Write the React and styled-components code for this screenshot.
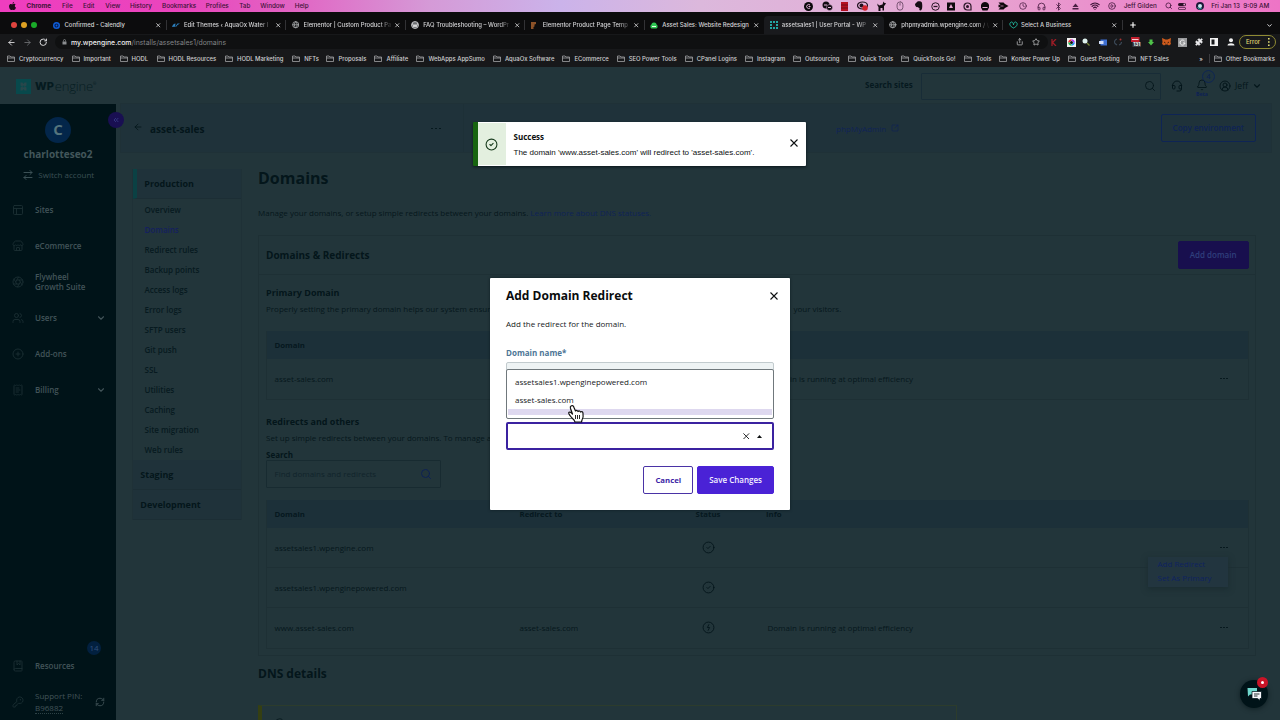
import React from 'react';
import styled, { createGlobalStyle, css } from 'styled-components';
import {
  ArrowLeft, ArrowRight, RotateCw, X, Plus, ChevronDown, ChevronsLeft, Search, Globe,
  Share, Star, Puzzle, Headset, Bell, CircleUserRound, ArrowRightLeft, PanelsTopLeft,
  Store, Aperture, Users, CirclePlus, ReceiptText, BookMarked, KeyRound, RefreshCw, CircleCheck,
  SquareArrowOutUpRight, Headphones, Bluetooth, Wifi, Clock, CirclePlay, Mouse, Info,
} from 'lucide-react';

const ink = '#04161b';
const inkSoft = '#06171c';
const page = '#22353a';
const line = '#1e3035';
const link = '#0f2357';
const ui = '"Open Sans", "Noto Sans", sans-serif';
const system = 'Inter, "Liberation Sans", sans-serif';

const GlobalStyle = createGlobalStyle`
  * { box-sizing: border-box; }
  body { margin: 0; background: ${page}; font-family: ${ui}; font-size: 8px; color: ${inkSoft}; }
  svg { display: block; flex: none; }
`;

const Desktop = styled.div`
  position: relative;
  width: 1280px;
  height: 720px;
  overflow: hidden;
  display: flex;
  flex-direction: column;
  background: ${page};
`;

/* System menu bar */
const MenuBar = styled.div`
  flex: none;
  height: 12px;
  display: flex;
  align-items: center;
  padding-left: 9px;
  font: 500 6.35px/12px ${system};
  color: #3b1236;
  background: linear-gradient(90deg, #ef3dbf 0, #ea45bd 180px, #e263c3 290px, #d59ad7 430px, #cbb3ea 560px,
    #dcb8dc 700px, #e2b0d8 860px, #e8a0d0 1000px, #ee74c6 1280px);
`;
const MenuItem = styled.span`
  flex: none;
  width: ${(p) => p.$w}px;
  white-space: pre;
  font-weight: ${(p) => (p.$bold ? 700 : 500)};
`;
const Slot = styled.span`
  flex: none;
  display: flex;
  align-items: center;
  width: ${(p) => p.$w}px;
  color: ${(p) => p.$c || 'inherit'};
`;
const IconBox = styled.span`
  width: 12px;
  display: flex;
  justify-content: center;
`;

/* Browser chrome */
const TabStrip = styled.div`
  flex: none;
  height: 22px;
  padding-top: 4px;
  display: flex;
  background: #0c0c0d;
  color: #d6d6d8;
  font: 500 5.9px/16px ${system};
`;
const Lights = styled.div`
  width: 47px;
  padding-left: 10.5px;
  display: flex;
  align-items: center;
  gap: 4px;
`;
const Light = styled.i`
  width: 6px;
  height: 6px;
  border-radius: 50%;
  background: ${(p) => p.$c};
`;
const Tab = styled.div`
  flex: none;
  width: 119.55px;
  height: 18px;
  display: flex;
  align-items: center;
  padding: 0 5px 0 4.5px;
  border-radius: 4px 4px 0 0;
  background: ${(p) => (p.$active ? '#191a1d' : 'transparent')};
`;
const TabRule = styled.i`
  flex: none;
  width: 1px;
  height: 10px;
  margin: 0 -5px 0 4px;
  background: ${(p) => (p.$hidden ? 'transparent' : '#323235')};
`;
const Favicon = styled.span`
  width: 13px;
  display: flex;
  justify-content: flex-start;
  padding-left: 1px;
`;
const TabTitle = styled.span`
  flex: none;
  width: 90px;
  white-space: pre;
  mask-image: ${(p) => (p.$fade ? 'linear-gradient(90deg, #000 84%, rgba(0, 0, 0, 0.15) 96%)' : 'none')};
`;
const TabClose = styled.span`
  flex: none;
  width: 7px;
  display: flex;
  justify-content: flex-end;
`;
const StripEnd = styled.div`
  flex: 1;
  display: flex;
  align-items: center;
  justify-content: space-between;
  padding: 0 7.5px 0 6px;
`;

const Toolbar = styled.div`
  flex: none;
  height: 16px;
  display: flex;
  align-items: center;
  padding-left: 5px;
  background: #17181a;
  color: #d9d9db;
`;
const Omnibox = styled.div`
  width: 993px;
  height: 14px;
  margin-left: 1px;
  border-radius: 7px;
  padding-left: 3px;
  display: flex;
  align-items: center;
  background: #0f1011;
  font: 400 6.9px/15px ${system};
  color: #818386;
`;
const Host = styled.span`
  color: #ececee;
  font-weight: 500;
`;
const Url = styled.div`
  flex: 1;
  padding-left: 1px;
  white-space: nowrap;
`;
const ErrorPill = styled.div`
  width: 37px;
  height: 14px;
  border: 1px solid #8f8a33;
  border-radius: 8px;
  display: flex;
  align-items: center;
  justify-content: space-between;
  padding: 0 5px 0 6px;
  color: #e2dc74;
  font: 500 6px/12px ${system};
`;
const Bookmarks = styled.div`
  flex: none;
  height: 17px;
  display: flex;
  align-items: center;
  padding-left: 7px;
  background: #17181a;
  color: #d0d0d2;
  font: 500 5.9px/16px ${system};
`;
const Bookmark = styled.span`
  flex: none;
  width: ${(p) => p.$w}px;
  display: flex;
  align-items: center;
  gap: 4px;
  white-space: nowrap;
`;
const BookmarkSep = styled.i`
  width: 1px;
  height: 9px;
  margin-right: 4px;
  background: #3c3c40;
`;

/* Portal header */
const SiteHeader = styled.header`
  flex: none;
  height: 36px;
  display: flex;
  align-items: center;
  padding: 2px 18px 0 16px;
`;
const Logo = styled.div`
  width: 849px;
  display: flex;
  align-items: center;
  color: #051a1f;
`;
const LogoWP = styled.span`
  margin-left: 4px;
  font: 800 11px/16px ${system};
`;
const LogoEngine = styled.span`
  margin-left: 1px;
  font: 300 13px/15px ${ui};
  letter-spacing: -0.2px;
  color: #071d22;
`;
const Registered = styled.span`
  margin-top: -5px;
  font: 400 4px/5px ${ui};
`;
const SearchLabel = styled.label`
  width: 56px;
  padding-bottom: 3px;
  font-weight: 700;
  color: #06191f;
`;
const SiteSearch = styled.div`
  width: 240px;
  height: 27px;
  border: 1px solid #182c37;
  border-radius: 1px;
  display: flex;
  align-items: center;
  justify-content: flex-end;
  padding-right: 4px;
  color: ${ink};
`;
const HeaderIcon = styled.span`
  width: ${(p) => p.$w}px;
  padding-left: ${(p) => p.$left}px;
  display: flex;
  align-items: center;
  gap: 4px;
  font-size: 8.6px;
  color: ${ink};
`;
const BellBox = styled.span`
  position: relative;
  width: 24px;
  display: flex;
  flex-direction: column;
  align-items: center;
  padding-top: 3px;
  color: ${ink};
`;
const BellCount = styled.span`
  position: absolute;
  right: -1px;
  top: -6px;
  width: 13px;
  height: 13px;
  border-radius: 50%;
  border: 1px solid #0f2654;
  background: #20343c;
  color: #0d2250;
  font: 600 7.5px/11px ${ui};
  text-align: center;
`;
const Beta = styled.span`
  font: 700 5.2px/6px ${ui};
  color: #0d2155;
`;

/* Sidebar */
const Body = styled.div`
  flex: 1;
  min-height: 0;
  display: flex;
`;
const Sidebar = styled.aside`
  position: relative;
  flex: none;
  width: 116px;
  margin-top: 1px;
  background: #001318;
  color: #425459;
  display: flex;
  flex-direction: column;
`;
const Collapse = styled.span`
  position: absolute;
  left: 108px;
  top: 8px;
  width: 16px;
  height: 16px;
  border-radius: 50%;
  background: #190f52;
  color: #3a418c;
  display: flex;
  align-items: center;
  justify-content: center;
`;
const Account = styled.div`
  display: flex;
  flex-direction: column;
  align-items: center;
  padding-top: 13px;
  height: 88px;
`;
const Avatar = styled.span`
  width: 26px;
  height: 26px;
  border-radius: 50%;
  background: #03264a;
  color: #55747c;
  font: 700 15px/25px ${ui};
  text-align: center;
`;
const AccountName = styled.span`
  margin-top: 3px;
  font: 700 10px/16px ${ui};
  color: #42565a;
`;
const SwitchAccount = styled.span`
  margin-top: 7px;
  display: flex;
  align-items: center;
  gap: 4.5px;
  line-height: 12px;
  color: #3b5055;
`;
const NavRow = styled.div`
  height: ${(p) => p.$h || 36}px;
  display: flex;
  align-items: center;
  padding: 0 10px 0 12px;
  line-height: 10px;
  font-weight: 600;
`;
const NavIcon = styled.span`
  width: 23px;
  color: #1b2f33;
`;
const NavText = styled.span`
  flex: 1;
  white-space: pre-line;
`;
const Spacer = styled.div`
  flex: 1;
`;
const ResourceCount = styled.span`
  align-self: flex-end;
  width: 14px;
  height: 14px;
  margin: 0 15px -1px 0;
  border-radius: 50%;
  background: #02203f;
  color: #31507c;
  font: 400 8px/14px ${ui};
  text-align: center;
`;
const PinRow = styled(NavRow)`
  height: 40px;
  margin: 4px 0 -2px;
  padding-right: 11px;
  font-weight: 400;
  line-height: 12.5px;
`;
const Pin = styled.span`
  border-bottom: 1px dotted #2d4246;
`;

/* Environment header */
const Main = styled.main`
  flex: 1;
  min-width: 0;
  display: flex;
  flex-direction: column;
`;
const EnvHeader = styled.div`
  flex: none;
  height: 50px;
  margin: 0 8px 0 4px;
  display: flex;
  align-items: center;
  border: 1px solid #1f3137;
  background: #1f323a;
`;
const EnvTitle = styled.div`
  width: 343px;
  height: 100%;
  display: flex;
  align-items: center;
  padding: 1px 22px 0 12px;
  border-right: 1px solid #1d3037;
  color: ${ink};
`;
const BackIcon = styled.span`
  padding-bottom: 4px;
`;
const EnvName = styled.span`
  flex: 1;
  padding-left: 7px;
  font: 700 10px/14px ${ui};
`;
const EnvLink = styled.span`
  flex: 1;
  display: flex;
  align-items: center;
  gap: 5px;
  padding: 0 0 0 372px;
  color: ${link};
`;
const Button = styled.span`
  flex: none;
  height: 28px;
  padding: 0 11px 1px;
  border-radius: 2px;
  display: flex;
  align-items: center;
  border: 1px solid;
  font-weight: 600;
  ${(p) => ({
    dimOutline: css`border-color: #0e2455; color: #0e2355; margin-right: 15px;`,
    dimSolid: css`border-color: #180f4e; background: #180f4e; color: #2f3f7c;`,
    outline: css`border-color: #4a33a6; background: #fff; color: #3c1fa6; font-weight: 700; font-size: 7.8px;`,
    solid: css`border-color: #4a22d6; background: #4a22d6; color: #f4f0ff;`,
  }[p.$kind])}
`;

/* Environment navigation */
const Columns = styled.div`
  flex: 1;
  min-height: 0;
  display: flex;
  padding: 16px 24px 0 16px;
`;
const EnvNav = styled.nav`
  flex: none;
  width: 110px;
  height: 351px;
  margin-right: 16px;
  border: 1px solid #1f3137;
  border-width: 0 1px;
  overflow: hidden;
`;
const EnvHeading = styled.div`
  height: 30px;
  display: flex;
  align-items: center;
  padding: 1px 0 0 7.3px;
  border-left: ${(p) => (p.$current ? '4px solid #0b4144' : '0')};
  border-bottom: 1px solid #1c2e35;
  background: #1f323a;
  color: ${ink};
  font: 700 9px/12px ${ui};
`;
const EnvList = styled.div`
  padding-bottom: 1px;
`;
const EnvItem = styled.div`
  height: 20px;
  line-height: 21px;
  padding-left: 11.5px;
  font-weight: 600;
  color: ${(p) => (p.$current ? '#14205f' : '#071a20')};
`;

/* Content */
const Content = styled.section`
  flex: 1;
  min-width: 0;
`;
const Title = styled.h1`
  margin: 0;
  font: 700 16px/19px ${ui};
  color: ${ink};
`;
const Lead = styled.p`
  margin: 19px 0 16px;
  line-height: 12px;
`;
const TextLink = styled.span`
  color: ${link};
`;
const Card = styled.div`
  height: 421px;
  border: 1px solid ${line};
  padding: 0 7px;
`;
const CardHeader = styled.div`
  height: 39px;
  margin: 0 -7px;
  padding: 0 6.5px 0 7px;
  display: flex;
  align-items: center;
  justify-content: space-between;
  border-bottom: 1px solid ${line};
  font: 700 10px/14px ${ui};
  color: ${ink};
`;
const AddDomain = styled(Button)`
  font: 600 8px/12px ${ui};
`;
const SectionTitle = styled.h3`
  margin: ${(p) => p.$top}px 0 4px;
  font: 700 9px/12px ${ui};
  color: ${ink};
`;
const Copy = styled.p`
  margin: 0;
  display: flex;
  height: 12px;
  line-height: 12px;
  white-space: nowrap;
`;
const CopyStart = styled.span`
  width: 527.5px;
`;
const Table = styled.div`
  width: 983px;
  margin-top: ${(p) => p.$top}px;
  border: 1px solid ${line};
  border-top: 0;
`;
const Row = styled.div`
  display: grid;
  grid-template-columns: 245px 172px 33px 1fr 21px;
  align-items: center;
  height: ${(p) => (p.$head ? 28 : 40)}px;
  padding: 0 20.5px ${(p) => (p.$head ? 0 : p.$last ? 2 : 1)}px 7.5px;
  border-bottom: ${(p) => (p.$head || p.$last ? 0 : 1)}px solid ${line};
  background: ${(p) => (p.$head ? '#1c3039' : 'transparent')};
  font-weight: ${(p) => (p.$head ? 700 : 400)};
  font-size: ${(p) => (p.$head ? 7.8 : 8)}px;
  color: ${(p) => (p.$head ? '#06181f' : inkSoft)};
`;
const StatusCell = styled.span`
  display: flex;
  justify-content: center;
`;
const InfoCell = styled.span`
  padding-left: ${(p) => (p.$head ? 41.5 : 43)}px;
  white-space: nowrap;
`;
const ActionCell = styled.span`
  position: relative;
  display: flex;
  justify-content: flex-end;
  padding-top: 1px;
`;
const Dots = styled.span`
  display: flex;
  gap: ${(p) => (p.$wide ? 2 : 1)}px;
  &::before, &::after, i { content: ''; width: 2px; height: 1.6px; border-radius: 1px; background: ${ink}; }
`;
const ActionMenu = styled.div`
  position: absolute;
  z-index: 1;
  right: 0;
  top: 11px;
  width: 80px;
  height: 30px;
  padding: 0 0 0 10px;
  background: #22353f;
  box-shadow: 0 2px 5px 1px #1c2e33;
  color: #0f2360;
  line-height: 14.5px;
`;
const FieldLabel = styled.div`
  margin-top: 5px;
  font: 700 8px/11px ${ui};
  color: ${ink};
`;
const DomainSearch = styled.div`
  width: 175px;
  height: 28px;
  border: 1px solid #182b31;
  border-radius: 1px;
  display: flex;
  align-items: center;
  justify-content: space-between;
  padding: 0 8px 1px 7.5px;
  color: #11242b;
`;
const DnsTitle = styled.h2`
  margin: 10px 0 23px;
  font: 700 12px/16px ${ui};
  color: ${ink};
`;
const Notice = styled.div`
  width: 699px;
  height: 40px;
  padding: 12px 0 0 13px;
  border: 1px solid #2c3c2c;
  border-left: 4px solid #353f12;
  color: ${ink};
  display: flex;
  gap: 12px;
`;

/* Overlays */
const Toast = styled.div`
  position: absolute;
  left: 473px;
  top: 122px;
  width: 333px;
  height: 44px;
  display: flex;
  background: #fff;
  border: solid #17640f;
  border-width: 0 0 0 5px;
  border-radius: 1px;
  color: #0c0f10;
  box-shadow: 0 1px 3px rgba(0, 10, 14, 0.7);
`;
const ToastIcon = styled.span`
  width: 27.5px;
  margin: 1px 0;
  display: flex;
  align-items: center;
  justify-content: center;
  background: #e3efdf;
  color: #173a1c;
`;
const ToastText = styled.div`
  flex: 1;
  padding: 8.5px 0 0 8px;
  font: 400 8px/12px "Liberation Sans", Arial, sans-serif;
`;
const ToastTitle = styled.div`
  margin-bottom: 4px;
  font: 700 8px/12px ${ui};
`;
const ToastClose = styled.span`
  width: 26px;
  display: flex;
  align-items: center;
  padding: 0 0 2px 9.5px;
`;
const Modal = styled.div`
  position: absolute;
  left: 490px;
  top: 278px;
  width: 300px;
  height: 232px;
  padding: 10px 16px 0;
  border-radius: 1px;
  background: #fff;
  color: #16191b;
  box-shadow: 0 0 3px rgba(0, 16, 20, 0.6);
`;
const ModalHead = styled.div`
  display: flex;
  align-items: center;
  justify-content: space-between;
  height: 16px;
  margin-right: -4px;
  color: #0a0c0d;
  font: 700 12px/16px ${ui};
`;
const ModalText = styled.p`
  margin: 14px 0 16px;
  line-height: 12px;
`;
const ModalLabel = styled.div`
  height: 12px;
  margin-bottom: 4px;
  font: 700 8px/13px ${ui};
  color: #4d7596;
`;
const Fields = styled.div`
  position: relative;
  height: 88px;
  display: flex;
  flex-direction: column;
  justify-content: space-between;
`;
const LockedSelect = styled.div`
  height: 28px;
  border: 1px solid #c2cbce;
  border-radius: 2px;
  background: #eef3f4;
`;
const Options = styled.div`
  position: absolute;
  left: 0;
  top: 7px;
  width: 268px;
  height: 50px;
  padding: 3px 0;
  border: 1px solid #70787c;
  border-radius: 2px;
  background: #fff;
`;
const Option = styled.div`
  height: 18px;
  padding-left: 8px;
  line-height: 18px;
`;
const OptionHover = styled.div`
  height: 6px;
  margin: 0 1px;
  background: #ded8ef;
`;
const Combo = styled.div`
  height: 28px;
  border: 2px solid #3b22a0;
  border-radius: 2px;
  display: flex;
  align-items: center;
  justify-content: flex-end;
  gap: 7px;
  padding-right: 10.5px;
  background: #fff;
`;
const ModalActions = styled.div`
  margin-top: 16px;
  display: flex;
  justify-content: flex-end;
  gap: 4px;
`;
const Pointer = styled.div`
  position: absolute;
  left: 567px;
  top: 404px;
`;
const Chat = styled.div`
  position: absolute;
  left: 1240px;
  top: 680px;
  width: 28px;
  height: 28px;
  border-radius: 50%;
  background: #001318;
  box-shadow: 0 1px 5px rgba(0, 16, 20, 0.6);
  display: flex;
  align-items: center;
  justify-content: center;
`;
const ChatBadge = styled.span`
  position: absolute;
  right: 0;
  top: -3px;
  width: 11px;
  height: 11px;
  border-radius: 50%;
  border: 4px solid #c91427;
  background: #fff;
`;

const menuItems = [['Chrome', 35.5, true], ['File', 21], ['Edit', 22.3], ['View', 24.7], ['History', 32], ['Bookmarks', 43.8],
  ['Profiles', 33.4], ['Tab', 21], ['Window', 34.5], ['Help', 508]];

const disc = (inner) => (
  <svg width="9" height="9" viewBox="0 0 18 18"><circle cx="9" cy="9" r="9" fill="#0b090b" />{inner}</svg>
);
const statusIcons = [
  [19, disc(<path d="M12 6a4 4 0 1 0 0 6M9 9h4" stroke="#e6b4da" strokeWidth="2" fill="none" />)],
  [17, <svg width="11" height="10" viewBox="0 0 22 20"><circle cx="8" cy="8" r="7" fill="#120c12" /><circle cx="15" cy="13" r="6" fill="#120c12" stroke="#dfb2d8" strokeWidth="1" /><path d="M12 13h6M4 8h6" stroke="#e6b4da" strokeWidth="2" /></svg>],
  [18, <svg width="7" height="9" viewBox="0 0 14 18"><path d="M0 0h14v18H0z" fill="#b50f22" /><path d="M0 6h14M0 12h14" stroke="#6e0a16" strokeWidth="2" /></svg>],
  [19, <svg width="11" height="10" viewBox="0 0 22 20"><ellipse cx="11" cy="9" rx="10" ry="7" fill="none" stroke="#221320" strokeWidth="2.4" /><circle cx="9" cy="9" r="4" fill="#221320" /><circle cx="16" cy="14" r="5.5" fill="#d3202c" /></svg>],
  [18, <svg width="9" height="10" viewBox="0 0 18 20"><path d="M1 5l3 4 7-2 2-6 2 3h3l-2 4-2 2v9h-3v-5H7v6H3v-8L1 9z" fill="#140c13" /></svg>],
  [19, <Mouse size={10} color="#6f4c69" strokeWidth={2.2} />],
  [17, <svg width="9" height="10" viewBox="0 0 18 20"><path d="M2 6l5-5c4-1 9 0 9 3 1 6 1 14-3 15-3 0-3-4-1-4-3-1-3-2-4-3-3 1-6-1-6-6z" fill="#140c13" /></svg>],
  [15.5, <svg width="9" height="9" viewBox="0 0 18 18"><circle cx="9" cy="9" r="7.5" fill="none" stroke="#2a1727" strokeWidth="2" /><path d="M5 9h8" stroke="#2a1727" strokeWidth="2.6" /></svg>],
  [16.5, <svg width="8" height="9" viewBox="0 0 16 18"><path d="M0 1h16v16H0z" fill="#0e090d" /><path d="M8 4l4 8H4z" fill="#e8a8d4" /></svg>],
  [17.5, <svg width="9" height="9" viewBox="0 0 18 18"><path d="M16 16H9A7 7 0 1 1 16 9z" fill="none" stroke="#2a1727" strokeWidth="2.4" /><circle cx="9" cy="9" r="3" fill="#2a1727" /></svg>],
  [18.5, <svg width="10" height="9" viewBox="0 0 20 18"><path d="M2 6c2-8 14-8 16 0v5l-3 6H5l-3-6z" fill="#0e090d" /><path d="M5 11h10" stroke="#e8a8d4" strokeWidth="2" /></svg>],
  [19, <svg width="11" height="8" viewBox="0 0 22 16"><path d="M1 1h10l3 3 7 4-7 4-3 3H1l4-4.500H1v-5h4z" fill="#0e090d" /><path d="M5 8h6" stroke="#e8a0d0" strokeWidth="1.400" /></svg>],
  [19, <Clock size={8} strokeWidth={2} />],
  [17, <Headphones size={9} strokeWidth={2} />],
  [17, <Bluetooth size={9} strokeWidth={2} />],
  [19, <svg width="7" height="7" viewBox="0 0 14 14"><path d="M7 1l6 7H1zM1 10h12v3H1z" fill="#4b2044" /></svg>],
  [17, <Wifi size={10} strokeWidth={2.8} />],
  [18, <CirclePlay size={8} strokeWidth={2.2} />],
];

const tabs = [
  ['Confirmed - Calendly', <svg width="7" height="7" viewBox="0 0 14 14"><circle cx="7" cy="7" r="7" fill="#0f5fd8" /><circle cx="7" cy="7" r="3" fill="none" stroke="#061e58" strokeWidth="2.4" /></svg>],
  ['Edit Themes ‹ AquaOx Water I', <svg width="8" height="6" viewBox="0 0 16 12"><path d="M0 10c2-6 4-7 7-7l-1 7 5-7h5l-5 3-2 3z" fill="#2c7fbd" /></svg>, 'fade'],
  ['Elementor | Custom Product Pa', <Globe size={7.5} color="#a9abae" strokeWidth={2.6} />, 'fade'],
  ['FAQ Troubleshooting – WordPr', <svg width="8" height="8" viewBox="0 0 16 16"><circle cx="8" cy="8" r="7" fill="#6d6f72" stroke="#d5d6d8" strokeWidth="1.6" /><path d="M3 5l3 7 2-5 2 5 3-7" fill="none" stroke="#fff" strokeWidth="1.6" /></svg>, 'fade'],
  ['Elementor Product Page Temp', <svg width="5" height="7" viewBox="0 0 10 14"><path d="M0 0h10v4l-3 1v4l-2 1v4H0z" fill="#8c5228" /></svg>, 'fade'],
  ['Asset Sales: Website Redesign', <svg width="8" height="7" viewBox="0 0 16 14"><path d="M8 1c4 0 5 3 5 4 3 1 3 7 0 8H3c-3-1-3-7 0-8 0-1 1-4 5-4z" fill="#2fc653" /><path d="M4 9h8" stroke="#e6ffe9" strokeWidth="2" /></svg>],
  ['assetsales1 | User Portal - WP', <svg width="8" height="8" viewBox="0 0 16 16"><path d="M0 0h4v4H0zM6 0h4v4H6zM12 0h4v4h-4zM0 6h4v4H0zM12 6h4v4h-4zM0 12h4v4H0zM6 12h4v4H6zM12 12h4v4h-4z" fill="#23a6a4" /></svg>, 'fade', true],
  ['phpmyadmin.wpengine.com / \\', <Globe size={7.5} color="#a9abae" strokeWidth={2.6} />, 'fade'],
  ['Select A Business', <svg width="9" height="8" viewBox="0 0 18 16"><path d="M9 14C2 11 0 6 3 3s6 1 6 5c0-4 3-8 6-5s1 8-6 11z" fill="none" stroke="#22b39a" strokeWidth="2" /></svg>],
];

const extensions = [
  [16, <Share size={7.5} strokeWidth={2.2} />],
  [18.5, <Star size={8} strokeWidth={2.2} />],
  [17, <svg width="6" height="7" viewBox="0 0 12 14"><path d="M2 0v14M10 0L3 7l7 7" fill="none" stroke="#a01c26" strokeWidth="2.6" /></svg>],
  [15, <svg width="9" height="9" viewBox="0 0 18 18"><path d="M0 0h18v18H0z" fill="#f2f2f2" /><path d="M4 9a5 5 0 0 1 5-5" stroke="#e33" strokeWidth="3.4" fill="none" /><path d="M9 4a5 5 0 0 1 5 5" stroke="#a3f" strokeWidth="3.4" fill="none" /><path d="M14 9a5 5 0 0 1-5 5" stroke="#29f" strokeWidth="3.4" fill="none" /><path d="M9 14a5 5 0 0 1-5-5" stroke="#2b5" strokeWidth="3.4" fill="none" /><circle cx="9" cy="9" r="3" fill="#111" /></svg>],
  [17, <svg width="8" height="8" viewBox="0 0 16 16"><circle cx="6" cy="6" r="5" fill="#dff2ee" /><path d="M10 10l5 5" stroke="#7a8a3a" strokeWidth="2.6" /></svg>],
  [15, <svg width="9" height="7" viewBox="0 0 18 14"><path d="M3 1h13v12H3z" fill="#3e6fd2" /><path d="M0 4h9v6H0z" fill="#d4e0fa" /></svg>],
  [17, <svg width="8" height="8" viewBox="0 0 16 16"><path d="M6 2a6 6 0 0 0-4 9l4 3M10 14a6 6 0 0 0 5-6" fill="none" stroke="#3c4a58" strokeWidth="2.2" /><circle cx="13" cy="3" r="2" fill="#a33" /></svg>],
  [15.5, <svg width="11" height="12" viewBox="0 0 22 24"><path d="M2 2h17v10H2z" fill="#c3202f" /><path d="M4 7h13" stroke="#fff" strokeWidth="1.6" /><path d="M5 12h17v10H5z" fill="#3a3c3f" /><text x="13.5" y="20.4" textAnchor="middle" fontSize="9.5" fontWeight="700" fontFamily="Inter" fill="#f1f1f1">131</text></svg>],
  [15.5, <svg width="6" height="7" viewBox="0 0 12 14"><path d="M3 1h6v5h3l-6 7-6-7h3z" fill="#4fc34a" /></svg>],
  [16.5, <svg width="9" height="8" viewBox="0 0 18 16"><path d="M0 0l7 3h4l7-3-1 8 1 4-4 3-3-2H7l-3 2-4-3 1-4z" fill="#cc5a1c" /><path d="M4 8l3 2M14 8l-3 2" stroke="#3b1c0c" strokeWidth="2" /></svg>],
  [16, <svg width="9" height="9" viewBox="0 0 18 18"><path d="M0 0h18v18H0z" fill="#9a9b9d" /><path d="M13 6a5 5 0 1 0 1 4h-4" fill="none" stroke="#f5f5f5" strokeWidth="2" /></svg>],
  [15.5, <Puzzle size={8} fill="#ececee" color="#ececee" strokeWidth={1.5} />],
  [16.5, <svg width="8" height="8" viewBox="0 0 16 16"><path d="M1.5 1.5h13v13h-13z" fill="none" stroke="#f2f2f2" strokeWidth="3" /><path d="M9 2h5v12H9z" fill="#f2f2f2" /></svg>],
  [14.5, <svg width="8" height="8" viewBox="0 0 16 16"><circle cx="8" cy="4.5" r="4" fill="#f2f2f2" /><path d="M1 15c0-6 14-6 14 0z" fill="#f2f2f2" /></svg>],
];

const bookmarks = [['Cryptocurrency', 64.5], ['Important', 48], ['HODL', 37], ['HODL Resources', 68.5], ['HODL Marketing', 67.3],
  ['NFTs', 34.2], ['Proposals', 48], ['Affiliate', 42], ['WebApps AppSumo', 76.5], ['AquaOx Software', 69.4],
  ['ECommerce', 54.3], ['SEO Power Tools', 68], ['CPanel Logins', 60.3], ['Instagram', 48], ['Outsourcing', 55.3],
  ['Quick Tools', 53], ['QuickTools Go!', 63], ['Tools', 35], ['Konker Power Up', 69], ['Guest Posting', 60], ['NFT Sales', 71]];

const envItems = ['Overview', 'Domains', 'Redirect rules', 'Backup points', 'Access logs', 'Error logs', 'SFTP users',
  'Git push', 'SSL', 'Utilities', 'Caching', 'Site migration', 'Web rules'];

const navItems = [
  ['Sites', PanelsTopLeft], ['eCommerce', Store], ['Flywheel\nGrowth Suite', Aperture], ['Users', Users, true],
  ['Add-ons', CirclePlus], ['Billing', ReceiptText, true],
];

const FolderIcon = () => (
  <svg width="8" height="7" viewBox="0 0 16 14"><path d="M1 2h5l2 2h7v9H1zM1 6h14" fill="none" stroke="#a9a9ac" strokeWidth="1.5" /></svg>
);
const Apple = () => (
  <svg width="7" height="8" viewBox="0 0 14 16"><path d="M10 0c0 2-1 3.500-3 3.500C7 1.500 8.500.3 10 0zM7 4.500c1 0 2-1 3.500-1 1 0 2 .5 2.800 1.500-2.500 1.500-2 5 .7 6-.8 2.500-2.300 5-4 5-1.200 0-1.600-.7-3-.7s-1.800.7-3 .7C1.500 16-2 8 1.500 4.800 3.500 3 5.500 4.500 7 4.500z" fill="#1d0a1a" /></svg>
);
const LogoMark = () => (
  <svg width="15" height="15" viewBox="0 0 30 30"><path d="M0 0h30v30H0z" fill="#08494c" /><path d="M9 7h4l2 3 2-3h4v6l-3 2 3 2v6h-4l-2-3-2 3H9v-6l3-2-3-2z" fill="#28474b" /><circle cx="15" cy="15" r="2" fill="#08494c" /></svg>
);
const Bolt = () => (
  <svg width="13" height="13" viewBox="0 0 24 24" fill="none" stroke={ink} strokeWidth="1.700"><circle cx="12" cy="12" r="10" /><path d="M13 6l-3 6h4l-3 6" /></svg>
);
const Close = ({ size = 8 }) => (
  <svg width={size} height={size} viewBox="0 0 16 16"><path d="M1 1l14 14M15 1L1 15" stroke="#0d1011" strokeWidth="2.200" fill="none" /></svg>
);
const MoreDots = ({ wide }) => <Dots $wide={wide}><i /></Dots>;

function BrowserChrome() {
  return (
    <>
      <MenuBar>
        <Slot $w={17.5}><Apple /></Slot>
        {menuItems.map(([t, w, b]) => <MenuItem key={t} $w={w} $bold={b}>{t}</MenuItem>)}
        {statusIcons.map(([w, icon], i) => <Slot key={i} $w={w}><IconBox>{icon}</IconBox></Slot>)}
        <MenuItem $w={39}>Jeff Gilden</MenuItem>
        <Slot $w={13.5}><IconBox><Search size={7.5} strokeWidth={2.4} /></IconBox></Slot>
        <Slot $w={18}><IconBox><svg width="8" height="7" viewBox="0 0 16 14"><rect width="16" height="6" rx="3" fill="#2c1228" /><circle cx="12.500" cy="3" r="1.800" fill="#eda0d4" /><rect x="1" y="8.500" width="14" height="5" rx="2.500" fill="none" stroke="#2c1228" strokeWidth="1.600" /></svg></IconBox></Slot>
        <Slot $w={17}><IconBox><svg width="8" height="8" viewBox="0 0 16 16"><circle cx="8" cy="8" r="8" fill="#1c1838" /><circle cx="8" cy="8" r="4" fill="#c8e8f2" /><path d="M3 11a6 6 0 0 0 8 2" stroke="#27b6a8" strokeWidth="2" fill="none" /></svg></IconBox></Slot>
        <MenuItem $w={62}>{'Fri Jan 13  9:09 AM'}</MenuItem>
      </MenuBar>
      <TabStrip>
        <Lights><Light $c="#e0443e" /><Light $c="#dea123" /><Light $c="#1aab29" /></Lights>
        {tabs.map(([t, icon, fade, active], i) => (
          <Tab key={t} $active={active}>
            <Favicon>{icon}</Favicon>
            <TabTitle $fade={!!fade}>{t}</TabTitle>
            <TabClose><X size={6.5} strokeWidth={3} /></TabClose>
            <TabRule $hidden={active || i === 5} />
          </Tab>
        ))}
        <StripEnd><Plus size={8} strokeWidth={3.4} color="#fff" /><ChevronDown size={7} strokeWidth={3.4} /></StripEnd>
      </TabStrip>
      <Toolbar>
        <Slot $w={16}><IconBox><ArrowLeft size={9} strokeWidth={2.4} /></IconBox></Slot>
        <Slot $w={16} $c="#6b6d70"><IconBox><ArrowRight size={9} strokeWidth={2.4} /></IconBox></Slot>
        <Slot $w={17}><IconBox><RotateCw size={8.5} strokeWidth={2.8} /></IconBox></Slot>
        <Omnibox>
          <IconBox><svg width="5" height="6" viewBox="0 0 10 12"><path d="M1 5h8v6H1z" fill="#8b8d90" /><path d="M3 5V3a2 2 0 0 1 4 0v2" fill="none" stroke="#8b8d90" strokeWidth="1.500" /></svg></IconBox>
          <Url><Host>my.wpengine.com</Host>/installs/assetsales1/domains</Url>
          {extensions.slice(0, 2).map(([w, icon], i) => <Slot key={i} $w={w} $c="#cfd0d2"><IconBox>{icon}</IconBox></Slot>)}
        </Omnibox>
        {extensions.slice(2).map(([w, icon], i) => <Slot key={i} $w={w}><IconBox>{icon}</IconBox></Slot>)}
        <ErrorPill>Error<svg width="2" height="8" viewBox="0 0 2 8"><path d="M0 0h1.600v1.600H0zM0 3.200h1.600v1.600H0zM0 6.400h1.600V8H0z" fill="#e2dc74" /></svg></ErrorPill>
      </Toolbar>
      <Bookmarks>
        {bookmarks.map(([t, w]) => <Bookmark key={t} $w={w}><FolderIcon />{t}</Bookmark>)}
        <Bookmark $w={9.5}>»</Bookmark>
        <BookmarkSep />
        <Bookmark $w={64}><FolderIcon />Other Bookmarks</Bookmark>
      </Bookmarks>
    </>
  );
}

function PortalHeader() {
  return (
    <SiteHeader>
      <Logo><LogoMark /><LogoWP>WP</LogoWP><LogoEngine>engine</LogoEngine><Registered>®</Registered></Logo>
      <SearchLabel>Search sites</SearchLabel>
      <SiteSearch><Search size={12} strokeWidth={1.8} /></SiteSearch>
      <HeaderIcon $w={29} $left={10}><Headset size={12} strokeWidth={2} /></HeaderIcon>
      <BellBox><Bell size={12} strokeWidth={1.8} /><Beta>Beta</Beta><BellCount>4</BellCount></BellBox>
      <HeaderIcon $w={48} $left={5}><CircleUserRound size={12} strokeWidth={2} />Jeff<ChevronDown size={10} strokeWidth={2.6} /></HeaderIcon>
    </SiteHeader>
  );
}

function AccountSidebar() {
  return (
    <Sidebar>
      <Collapse><ChevronsLeft size={8} strokeWidth={2.4} /></Collapse>
      <Account>
        <Avatar>C</Avatar>
        <AccountName>charlotteseo2</AccountName>
        <SwitchAccount><ArrowRightLeft size={12} strokeWidth={2} />Switch account</SwitchAccount>
      </Account>
      {navItems.map(([t, Icon, open]) => (
        <NavRow key={t}>
          <NavIcon><Icon size={12} strokeWidth={1.8} /></NavIcon>
          <NavText>{t}</NavText>
          {open && <ChevronDown size={10} strokeWidth={2.6} />}
        </NavRow>
      ))}
      <Spacer />
      <ResourceCount>14</ResourceCount>
      <NavRow $h={24}>
        <NavIcon><BookMarked size={12} strokeWidth={1.8} /></NavIcon>
        <NavText>Resources</NavText>
      </NavRow>
      <PinRow>
        <NavIcon><KeyRound size={12} strokeWidth={1.8} /></NavIcon>
        <NavText>Support PIN: <Pin>B96882</Pin></NavText>
        <RefreshCw size={10} strokeWidth={2} />
      </PinRow>
    </Sidebar>
  );
}

function DomainRow({ domain, target, ok, info, menu, more, last }) {
  return (
    <Row $last={last}>
      <span>{domain}</span>
      <span>{target}</span>
      <StatusCell>{ok === 'bolt' ? <Bolt /> : ok && <CircleCheck size={13} strokeWidth={1.7} color={ink} />}</StatusCell>
      <InfoCell>{info}</InfoCell>
      <ActionCell>
        {more && <MoreDots />}
        {menu && <ActionMenu>Add Redirect<br />Set As Primary</ActionMenu>}
      </ActionCell>
    </Row>
  );
}

function DomainsPage() {
  return (
    <Content>
      <Title>Domains</Title>
      <Lead>Manage your domains, or setup simple redirects between your domains. <TextLink>Learn more about DNS statuses.</TextLink></Lead>
      <Card>
        <CardHeader>Domains &amp; Redirects<AddDomain $kind="dimSolid">Add domain</AddDomain></CardHeader>
        <SectionTitle $top={12}>Primary Domain</SectionTitle>
        <Copy><CopyStart>Properly setting the primary domain helps our system ensure</CopyStart>your visitors.</Copy>
        <Table $top={16}>
          <Row $head><span>Domain</span></Row>
          <DomainRow domain="asset-sales.com" info="Domain is running at optimal efficiency" more last />
        </Table>
        <SectionTitle $top={16}>Redirects and others</SectionTitle>
        <Copy>Set up simple redirects between your domains. To manage a</Copy>
        <FieldLabel>Search</FieldLabel>
        <DomainSearch>Find domains and redirects<Search size={12} strokeWidth={2} color="#0d2155" /></DomainSearch>
        <Table $top={12}>
          <Row $head><span>Domain</span><span>Redirect to</span><StatusCell>Status</StatusCell><InfoCell $head>Info</InfoCell></Row>
          <DomainRow domain="assetsales1.wpengine.com" ok="check" more menu />
          <DomainRow domain="assetsales1.wpenginepowered.com" ok="check" />
          <DomainRow domain="www.asset-sales.com" target="asset-sales.com" ok="bolt" info="Domain is running at optimal efficiency" more last />
        </Table>
      </Card>
      <DnsTitle>DNS details</DnsTitle>
      <Notice><Info size={9} strokeWidth={2} /></Notice>
    </Content>
  );
}

function RedirectModal() {
  return (
    <Modal>
      <ModalHead>Add Domain Redirect<Close /></ModalHead>
      <ModalText>Add the redirect for the domain.</ModalText>
      <ModalLabel>Domain name*</ModalLabel>
      <Fields>
        <LockedSelect />
        <Combo>
          <Close size={6.5} />
          <svg width="5" height="3" viewBox="0 0 10 6"><path d="M0 6l5-6 5 6z" fill="#0d1011" /></svg>
        </Combo>
        <Options>
          <Option>assetsales1.wpenginepowered.com</Option>
          <Option>asset-sales.com</Option>
          <OptionHover />
        </Options>
      </Fields>
      <ModalActions>
        <Button $kind="outline">Cancel</Button>
        <Button $kind="solid">Save Changes</Button>
      </ModalActions>
    </Modal>
  );
}

export default function App() {
  return (
    <Desktop>
      <GlobalStyle />
      <BrowserChrome />
      <PortalHeader />
      <Body>
        <AccountSidebar />
        <Main>
          <EnvHeader>
            <EnvTitle>
              <BackIcon><ArrowLeft size={10} strokeWidth={2} /></BackIcon>
              <EnvName>asset-sales</EnvName>
              <MoreDots wide />
            </EnvTitle>
            <EnvLink>phpMyAdmin <SquareArrowOutUpRight size={8} strokeWidth={2} /></EnvLink>
            <Button $kind="dimOutline">Copy environment</Button>
          </EnvHeader>
          <Columns>
            <EnvNav>
              <EnvHeading $current>Production</EnvHeading>
              <EnvList>
                {envItems.map((t) => <EnvItem key={t} $current={t === 'Domains'}>{t}</EnvItem>)}
              </EnvList>
              <EnvHeading>Staging</EnvHeading>
              <EnvHeading>Development</EnvHeading>
            </EnvNav>
            <DomainsPage />
          </Columns>
        </Main>
      </Body>
      <Toast>
        <ToastIcon><CircleCheck size={13} strokeWidth={2} /></ToastIcon>
        <ToastText><ToastTitle>Success</ToastTitle>The domain 'www.asset-sales.com' will redirect to 'asset-sales.com'.</ToastText>
        <ToastClose><Close /></ToastClose>
      </Toast>
      <RedirectModal />
      <Pointer>
        <svg width="19" height="19" viewBox="0 0 38 38"><path d="M8 4c3-2 5 0 6 3l3 7c2-2 4-1 5 1 2-2 4-1 5 1 3-2 5 0 5 3 1 6 1 9-2 13l-1 4H16l-2-4C10 28 6 24 4 20c-2-3 1-5 4-3l3 3L7 9C6 6 6 5 8 4z" fill="#fff" stroke="#111" strokeWidth="2.400" strokeLinejoin="round" /><path d="M17 22v8M21 22v8M25 22v8" stroke="#111" strokeWidth="1.800" /></svg>
      </Pointer>
      <Chat>
        <svg width="15" height="14" viewBox="0 0 30 28"><path d="M1 2h19v13H6l-4 4z" fill="#6fd8ce" /><path d="M10 9h19v14h-3v4l-5-4H10z" fill="#f7f7fb" stroke="#001318" strokeWidth="1.500" /><path d="M14 14h11M14 18h7" stroke="#2b3437" strokeWidth="2" /></svg>
        <ChatBadge />
      </Chat>
    </Desktop>
  );
}
